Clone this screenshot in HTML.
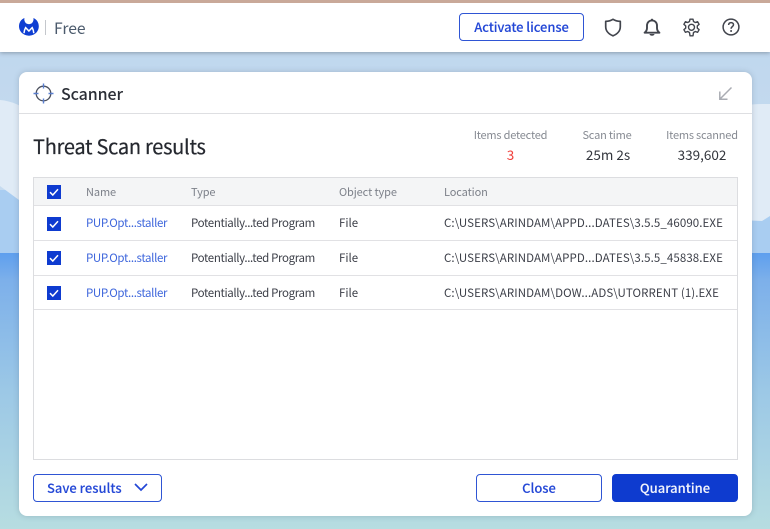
<!DOCTYPE html>
<html>
<head>
<meta charset="utf-8">
<style>
html,body{margin:0;padding:0}
body{width:770px;height:529px;overflow:hidden;position:relative;font-family:"Noto Sans CJK JP","Liberation Sans",sans-serif;background:#c6dcf0}
.abs{position:absolute;white-space:nowrap}
#bg{position:absolute;left:0;top:0;width:770px;height:529px}
#top{position:absolute;left:0;top:0;width:770px;height:52px;background:#fff;box-shadow:0 1px 4px rgba(70,80,90,.45)}
#strip{position:absolute;left:0;top:0;width:770px;height:3px;background:#c9a999}
#card{position:absolute;left:19px;top:72px;width:733px;height:444px;background:#fff;border-radius:8px;box-shadow:0 0 6px rgba(60,80,100,.25)}
.btn{position:absolute;box-sizing:border-box;border:1px solid #2f55d4;border-radius:4px;background:#fff;color:#2347d6;font-size:13px;font-weight:500;text-align:center;-webkit-text-stroke:.1px currentColor}
.line{position:absolute;background:#e1e1e4;height:1px}
.cb{position:absolute;left:47px;width:14px;height:14px;background:#0e3bd0}
.cb svg{display:block}
.t{position:absolute;white-space:nowrap;font-size:11.5px;color:#3c3f48;line-height:16px}
.ty{letter-spacing:-.36px}
.lo{letter-spacing:.09px}
.h{color:#7d818a;font-size:11px;letter-spacing:-.1px}
.n{color:#3f67dc;letter-spacing:-.35px}
.lab{position:absolute;white-space:nowrap;font-size:11px;letter-spacing:-.2px;color:#868a92;line-height:16px;text-align:center}
.val{position:absolute;white-space:nowrap;font-size:13.5px;color:#33363d;line-height:18px;text-align:center}
</style>
</head>
<body>
<svg id="bg" viewBox="0 0 770 529" preserveAspectRatio="none">
<defs>
<linearGradient id="sea" x1="0" y1="0" x2="0" y2="1"><stop offset="0" stop-color="#5e9fee"/><stop offset=".1" stop-color="#7db0ea"/><stop offset=".5" stop-color="#9cc8e6"/><stop offset="1" stop-color="#b7dde1"/></linearGradient>
<linearGradient id="sky" x1="0" y1="0" x2="0" y2="1"><stop offset="0" stop-color="#bed6ed"/><stop offset="1" stop-color="#c8ddf1"/></linearGradient>
</defs>
<rect width="770" height="254" fill="url(#sky)"/>
<rect y="190" width="770" height="64" fill="#a9cdf1"/>
<path d="M0 100C12 101 22 106 30 112L30 200L19 200L0 186ZM740 106C750 104 760 104 770 104L770 216L762 221L740 220Z" fill="#e0ebf6"/>
<rect y="253" width="770" height="276" fill="url(#sea)"/>
</svg>
<div id="top"></div>
<div id="strip"></div>

<svg class="abs" style="left:19px;top:18px" width="20" height="18" viewBox="0 0 20 18"><path d="M5.4 0C2 1.4 0 4.6 0 8.4C0 12.8 3.4 17.4 10 17.8C16.6 17.4 19.8 12.8 19.8 8.4C19.8 4.6 17.8 1.4 14.4 0C14.8 2.2 14 4 12.8 5.2C11 6.4 8.8 6.4 7 5.2C5.8 4 5 2.2 5.4 0Z" fill="#0f3ed2"/><path d="M5 15.2C5.1 13 5.6 11.4 6.6 9.6L9.9 13L13.2 9.6C14.2 11.4 14.7 13 14.8 15.2" fill="none" stroke="#fff" stroke-width="1.5"/></svg>
<div class="abs" style="left:45px;top:20px;width:1px;height:15px;background:#c4c7cc"></div>
<div class="abs" style="left:54px;top:17px;font-size:15.7px;line-height:22px;color:#4b5a6c">Free</div>

<div class="btn" style="left:459px;top:13px;width:125px;height:28px;line-height:26px;letter-spacing:-.08px">Activate license</div>

<svg class="abs" style="left:604px;top:18px" width="18" height="19" viewBox="0 0 18 19" fill="none" stroke="#42454d" stroke-width="1.7"><path d="M9 1.3C11 2.6 13.4 3.3 16.3 3.4V8.6C16.3 13 13.2 16.2 9 17.8C4.8 16.2 1.7 13 1.7 8.6V3.4C4.6 3.3 7 2.6 9 1.3Z" stroke-linejoin="round"/></svg>
<svg class="abs" style="left:643px;top:18px" width="18" height="19" viewBox="0 0 18 19" fill="none" stroke="#42454d" stroke-width="1.9"><path d="M1.6 14.7H16.4C14.6 13.4 14 12 14 10V7.6C14 4.6 11.8 2.4 9 2.4S4 4.6 4 7.6V10C4 12 3.4 13.4 1.6 14.7Z" stroke-linejoin="round"/><path d="M9 0.8V2.4" /><path d="M6.4 16C7 18.4 11 18.4 11.6 16Z" fill="#42454d" stroke="none"/></svg>
<svg class="abs" style="left:682px;top:18px" width="19" height="19" viewBox="0 0 19 19" fill="none" stroke="#42454d" stroke-width="1.4"><path d="M8 1.2H11L11.5 3.5L13.3 4.5L15.6 3.7L17.1 6.3L15.3 7.9V10.1L17.1 11.7L15.6 14.3L13.3 13.5L11.5 14.5L11 17.8H8L7.5 14.5L5.7 13.5L3.4 14.3L1.9 11.7L3.7 10.1V7.9L1.9 6.3L3.4 3.7L5.7 4.5L7.5 3.5Z" stroke-linejoin="round"/><circle cx="9.5" cy="9.3" r="3"/></svg>
<svg class="abs" style="left:722px;top:18px" width="18" height="18" viewBox="0 0 18 18" fill="none" stroke="#42454d" stroke-width="1.5"><circle cx="9" cy="9" r="7.9"/><path d="M6.6 7C6.7 5.4 7.8 4.6 9.1 4.6C10.5 4.6 11.5 5.5 11.5 6.7C11.5 8.5 9.1 8.7 9.1 10.7"/><circle cx="9.1" cy="13" r="1" fill="#42454d" stroke="none"/></svg>

<div id="card"></div>
<div class="line" style="left:19px;top:113px;width:733px;background:#dedfe2"></div>

<svg class="abs" style="left:33px;top:83px" width="21" height="21" viewBox="0 0 21 21" fill="none"><circle cx="10.5" cy="10.5" r="7.3" stroke="#4a4f5c" stroke-width="1.3"/><path d="M10.5 0.5V5.5M10.5 15.5V20.5M0.5 10.5H5.5M15.5 10.5H20.5" stroke="#5a7fd0" stroke-width="1.4"/></svg>
<div class="abs" style="left:61px;top:82px;font-size:16px;line-height:22px;font-weight:500;letter-spacing:-.1px;color:#2b2e36">Scanner</div>
<svg class="abs" style="left:718px;top:86px" width="15" height="15" viewBox="0 0 15 15" fill="none" stroke="#a9acb3" stroke-width="1.5"><path d="M13.5 1.5L2 13M1.8 5.5V13.2H9.5"/></svg>

<div class="abs" style="left:33px;top:132px;font-size:20px;line-height:28px;letter-spacing:-.27px;color:#25282f;-webkit-text-stroke:.2px #25282f">Threat Scan results</div>

<div class="lab" style="left:464px;top:127px;width:93px">Items detected</div>
<div class="val" style="left:464px;top:145px;width:93px;color:#f0403c">3</div>
<div class="lab" style="left:567px;top:127px;width:80px">Scan time</div>
<div class="val" style="left:568px;top:145px;width:80px">25m 2s</div>
<div class="lab" style="left:660px;top:127px;width:84px">Items scanned</div>
<div class="val" style="left:660px;top:145px;width:92px;margin-left:-4px">339,602</div>

<div class="abs" style="left:33px;top:177px;width:705px;height:283px;box-sizing:border-box;border:1px solid #dcdde0;background:#fff"></div>
<div class="abs" style="left:34px;top:178px;width:703px;height:27px;background:#f4f5f6"></div>
<div class="line" style="left:34px;top:205px;width:703px"></div>
<div class="line" style="left:34px;top:240px;width:703px"></div>
<div class="line" style="left:34px;top:275px;width:703px"></div>
<div class="line" style="left:34px;top:309px;width:703px"></div>

<div class="cb" style="top:185px"><svg width="14" height="14" viewBox="0 0 14 14" fill="none" stroke="#fff" stroke-width="1.5"><path d="M3 7.2L5.8 10L11 4.3"/></svg></div>
<div class="cb" style="top:217px"><svg width="14" height="14" viewBox="0 0 14 14" fill="none" stroke="#fff" stroke-width="1.5"><path d="M3 7.2L5.8 10L11 4.3"/></svg></div>
<div class="cb" style="top:251px"><svg width="14" height="14" viewBox="0 0 14 14" fill="none" stroke="#fff" stroke-width="1.5"><path d="M3 7.2L5.8 10L11 4.3"/></svg></div>
<div class="cb" style="top:286px"><svg width="14" height="14" viewBox="0 0 14 14" fill="none" stroke="#fff" stroke-width="1.5"><path d="M3 7.2L5.8 10L11 4.3"/></svg></div>

<div class="t h" style="left:86px;top:184px">Name</div>
<div class="t h" style="left:191px;top:184px">Type</div>
<div class="t h" style="left:339px;top:184px">Object type</div>
<div class="t h" style="left:444px;top:184px">Location</div>

<div class="t n" style="left:86px;top:215px">PUP.Opt...staller</div>
<div class="t ty" style="left:191px;top:215px">Potentially...ted Program</div>
<div class="t" style="left:339px;top:215px">File</div>
<div class="t lo" style="left:444px;top:215px">C:\USERS\ARINDAM\APPD...DATES\3.5.5_46090.EXE</div>

<div class="t n" style="left:86px;top:250px">PUP.Opt...staller</div>
<div class="t ty" style="left:191px;top:250px">Potentially...ted Program</div>
<div class="t" style="left:339px;top:250px">File</div>
<div class="t lo" style="left:444px;top:250px">C:\USERS\ARINDAM\APPD...DATES\3.5.5_45838.EXE</div>

<div class="t n" style="left:86px;top:285px">PUP.Opt...staller</div>
<div class="t ty" style="left:191px;top:285px">Potentially...ted Program</div>
<div class="t" style="left:339px;top:285px">File</div>
<div class="t lo" style="left:444px;top:285px">C:\USERS\ARINDAM\DOW...ADS\UTORRENT (1).EXE</div>

<div class="btn" style="left:33px;top:474px;width:129px;height:28px;line-height:25px;text-align:left;padding-left:13px">Save results</div>
<svg class="abs" style="left:134px;top:483px" width="14" height="9" viewBox="0 0 14 9" fill="none" stroke="#2347d6" stroke-width="1.7"><path d="M1 1L7 7L13 1"/></svg>
<div class="btn" style="left:476px;top:474px;width:126px;height:28px;line-height:25px">Close</div>
<div class="btn" style="left:612px;top:474px;width:126px;height:28px;line-height:25px;background:#0e3bcf;border-color:#0e3bcf;color:#f2f4fc">Quarantine</div>
</body>
</html>
